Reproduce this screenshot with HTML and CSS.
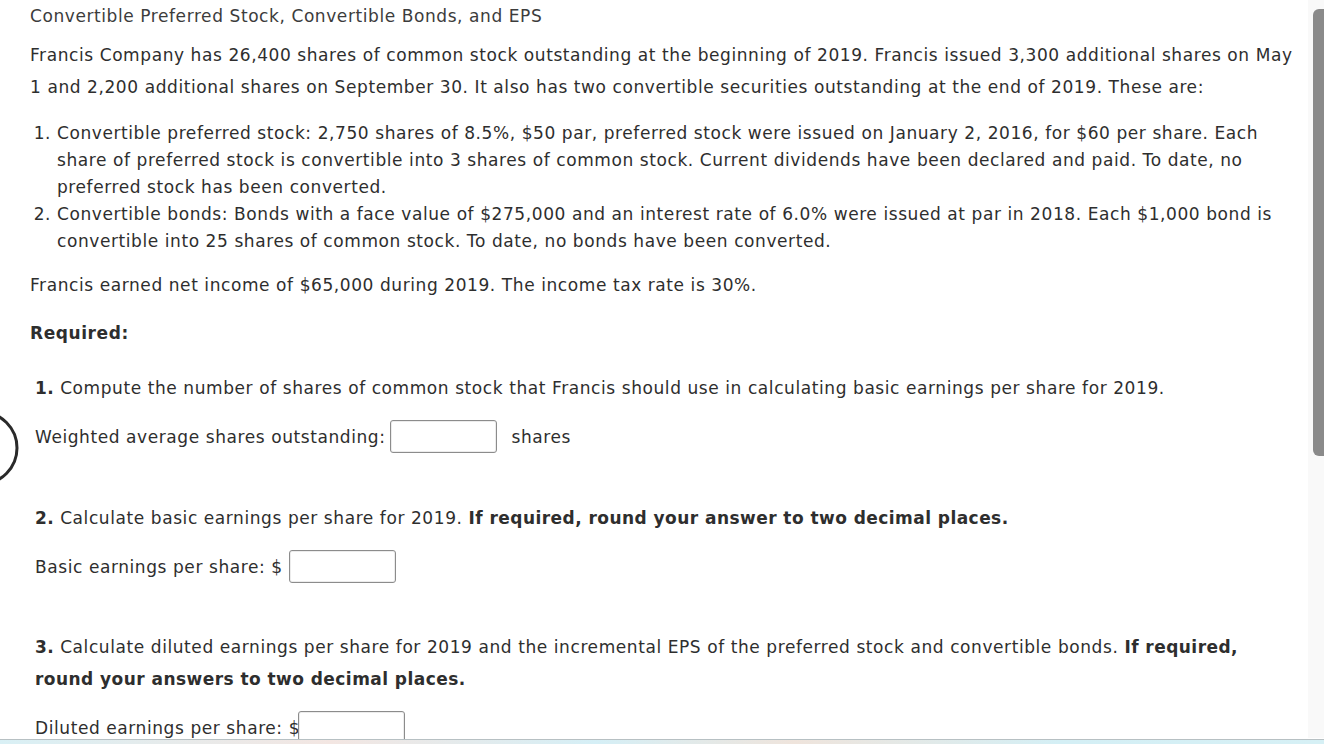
FILE: index.html
```html
<!DOCTYPE html>
<html>
<head>
<meta charset="utf-8">
<link rel="stylesheet" href="styles.css">
</head>
<body>
<div class="page">
  <div class="title">Convertible Preferred Stock, Convertible Bonds, and EPS</div>
  <p class="intro">Francis Company has 26,400 shares of common stock outstanding at the beginning of 2019. Francis issued 3,300 additional shares on May 1 and 2,200 additional shares on September 30. It also has two convertible securities outstanding at the end of 2019. These are:</p>
  <ol class="items">
    <li>Convertible preferred stock: 2,750 shares of 8.5%, $50 par, preferred stock were issued on January 2, 2016, for $60 per share. Each share of preferred stock is convertible into 3 shares of common stock. Current dividends have been declared and paid. To date, no preferred stock has been converted.</li>
    <li>Convertible bonds: Bonds with a face value of $275,000 and an interest rate of 6.0% were issued at par in 2018. Each $1,000 bond is convertible into 25 shares of common stock. To date, no bonds have been converted.</li>
  </ol>
  <p class="plain">Francis earned net income of $65,000 during 2019. The income tax rate is 30%.</p>
  <p class="required">Required:</p>

  <p class="q q1"><b>1.</b> Compute the number of shares of common stock that Francis should use in calculating basic earnings per share for 2019.</p>
  <div class="row">
    <span class="lbl">Weighted average shares outstanding:</span>
    <span class="box gap-a"></span>
    <span class="unit">shares</span>
  </div>

  <p class="q q2"><b>2.</b> Calculate basic earnings per share for 2019. <b>If required, round your answer to two decimal places.</b></p>
  <div class="row">
    <span class="lbl">Basic earnings per share: $</span>
    <span class="box gap-b"></span>
  </div>

  <p class="q q3"><b>3.</b> Calculate diluted earnings per share for 2019 and the incremental EPS of the preferred stock and convertible bonds. <b>If required, round your answers to two decimal places.</b></p>
  <div class="row">
    <span class="lbl">Diluted earnings per share: $</span>
    <span class="box gap-c"></span>
  </div>
</div>

<svg class="ring" width="24" height="90" viewBox="0 0 24 90">
  <circle cx="-19" cy="38" r="36" fill="none" stroke="#2a2a2a" stroke-width="3"/>
</svg>

<div class="scroll-track"><div class="scroll-thumb"></div></div>
<div class="taskbar"></div>
</body>
</html>
```

FILE: styles.css
```css
html, body {
  margin: 0;
  padding: 0;
  height: 100%;
  overflow: hidden;
  background: #ffffff;
}
body {
  font-family: "DejaVu Sans", Verdana, sans-serif;
  color: #2e2e2e;
  font-size: 17px;
  letter-spacing: 0.58px;
}
b {
  letter-spacing: 0.45px;
}
.page {
  padding: 6px 0 0 30px;
  width: 1272px;
}
.title {
  line-height: 20px;
  color: #3c3c3c;
}
.intro {
  margin: 13px 0 0 0;
  line-height: 32px;
}
.items {
  margin: 17px 0 0 0;
  padding: 0 0 0 27px;
  line-height: 27px;
}
.plain {
  margin: 14px 0 0 0;
  line-height: 32px;
}
.required {
  margin: 16px 0 0 0;
  line-height: 32px;
  font-weight: bold;
}
.q {
  margin: 0;
  padding-left: 5px;
  line-height: 32px;
}
.q1 { margin-top: 23px; }
.q2 { margin-top: 49px; }
.q3 { margin-top: 48px; }
.row {
  display: flex;
  align-items: center;
  height: 33px;
  margin-top: 16px;
  padding-left: 5px;
}
.box {
  width: 105px;
  height: 31px;
  border: 1px solid #8c8c8c;
  border-radius: 3px;
  background: #fff;
  box-shadow: inset 0 0 0 1px #ececec;
}
.gap-a { margin-left: 4px; }
.gap-b { margin-left: 6px; }
.gap-c { margin-left: -2px; }
.unit { margin-left: 15px; }
.ring {
  position: absolute;
  left: 0;
  top: 410px;
}
.scroll-track {
  position: absolute;
  top: 0;
  right: 0;
  width: 16px;
  height: 738px;
  background: #f9f9f9;
}
.scroll-thumb {
  position: absolute;
  top: 9px;
  right: 0;
  width: 11px;
  height: 447px;
  background: #8a8a8a;
  border-radius: 6px 0 0 6px;
}
.taskbar {
  position: absolute;
  left: 0;
  right: 0;
  bottom: 0;
  height: 5px;
  border-top: 1px solid #b7c0c3;
  background: linear-gradient(90deg, #d9f0f5 0%, #f3e6e2 25%, #d5eff6 45%, #efe4dc 60%, #d4eff5 80%, #d6f0f5 100%);
  box-sizing: border-box;
}
```
